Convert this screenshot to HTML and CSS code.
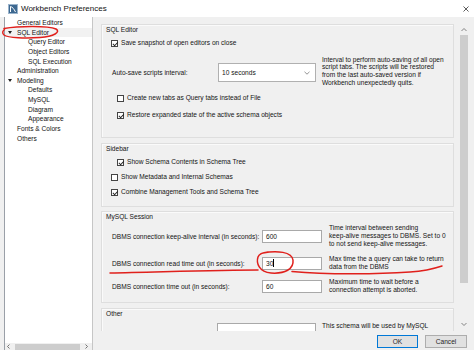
FILE: index.html
```html
<!DOCTYPE html>
<html lang="en">
<head>
  <meta charset="UTF-8">
  <title>Workbench Preferences</title>
  <link rel="stylesheet" href="styles.css">
</head>
<body>
  <div class="window">
    <!-- Barra de título -->
    <div class="titlebar">
      <svg class="app-icon" viewBox="0 0 10 10">
        <rect x="0.5" y="0.5" width="9" height="9" fill="#3d6890" stroke="#9bb4cc"/>
        <path d="M2.5 8 V2.5 C4.5 3 6 5 7.5 8" stroke="#fff" stroke-width="1" fill="none"/>
      </svg>
      <span class="title">Workbench Preferences</span>
      <svg class="close" viewBox="0 0 6 6">
        <path d="M0.5 0.5 L5.5 5.5 M5.5 0.5 L0.5 5.5" stroke="#333" stroke-width="0.8"/>
      </svg>
    </div>

    <div class="frame">
      <!-- Árvore -->
      <div class="tree">
        <div class="tree-list">
          <div class="node">General Editors</div>
          <div class="node open sel">SQL Editor</div>
          <div class="node child">Query Editor</div>
          <div class="node child">Object Editors</div>
          <div class="node child">SQL Execution</div>
          <div class="node">Administration</div>
          <div class="node open">Modeling</div>
          <div class="node child">Defaults</div>
          <div class="node child">MySQL</div>
          <div class="node child">Diagram</div>
          <div class="node child">Appearance</div>
          <div class="node">Fonts &amp; Colors</div>
          <div class="node">Others</div>
        </div>
        <div class="hscroll">
          <svg class="hs-arrow" viewBox="0 0 8 7"><path d="M4.5 1.5 L2.5 3.5 L4.5 5.5" stroke="#555" stroke-width="0.8" fill="none"/></svg>
          <div class="hs-thumb"></div>
          <svg class="hs-arrow" viewBox="0 0 8 7"><path d="M3.5 1.5 L5.5 3.5 L3.5 5.5" stroke="#555" stroke-width="0.8" fill="none"/></svg>
        </div>
      </div>

      <!-- Painel -->
      <div class="main">
        <div class="scroller">
          <div class="content">

            <div class="group g-sql">
              <div class="group-title">SQL Editor</div>
              <div class="row cb-row first"><span class="cb on"></span>Save snapshot of open editors on close</div>
              <div class="field-row autosave">
                <span class="label w-auto">Auto-save scripts interval:</span>
                <div class="select">10 seconds
                  <svg class="chev" viewBox="0 0 6 4"><path d="M0.5 0.8 L3 3.2 L5.5 0.8" stroke="#666" stroke-width="0.7" fill="none"/></svg>
                </div>
                <div class="desc tall">Interval to perform auto-saving of all open<br>script tabs. The scripts will be restored<br>from the last auto-saved version if<br>Workbench unexpectedly quits.</div>
              </div>
              <div class="row cb-row indent"><span class="cb"></span>Create new tabs as Query tabs instead of File</div>
              <div class="row cb-row indent"><span class="cb on"></span>Restore expanded state of the active schema objects</div>
            </div>

            <div class="group g-side">
              <div class="group-title">Sidebar</div>
              <div class="row cb-row indent"><span class="cb on"></span>Show Schema Contents in Schema Tree</div>
              <div class="row cb-row"><span class="cb"></span>Show Metadata and Internal Schemas</div>
              <div class="row cb-row"><span class="cb on"></span>Combine Management Tools and Schema Tree</div>
            </div>

            <div class="group g-session">
              <div class="group-title">MySQL Session</div>
              <div class="field-row first">
                <span class="label w-dbms">DBMS connection keep-alive interval (in seconds):</span>
                <div class="field">600</div>
                <div class="desc">Time interval between sending<br>keep-alive messages to DBMS. Set to 0<br>to not send keep-alive messages.</div>
              </div>
              <div class="field-row">
                <span class="label w-dbms">DBMS connection read time out (in seconds):</span>
                <div class="field">30<span class="caret"></span></div>
                <div class="desc">Max time the a query can take to return<br>data from the DBMS</div>
              </div>
              <div class="field-row">
                <span class="label w-dbms">DBMS connection time out (in seconds):</span>
                <div class="field">60</div>
                <div class="desc">Maximum time to wait before a<br>connection attempt is aborted.</div>
              </div>
            </div>

            <div class="group g-other">
              <div class="group-title">Other</div>
              <div class="field-row top first">
                <span class="label w-other"></span>
                <div class="field wide"></div>
                <div class="desc">This schema will be used by MySQL</div>
              </div>
            </div>

          </div>
          <div class="vscroll">
            <svg class="vs-arrow" viewBox="0 0 10 10"><path d="M2.5 6 L5 3.5 L7.5 6" stroke="#666" stroke-width="0.8" fill="none"/></svg>
            <div class="vs-thumb"></div>
            <div class="vs-fill"></div>
            <svg class="vs-arrow" viewBox="0 0 10 10"><path d="M2.5 4 L5 6.5 L7.5 4" stroke="#666" stroke-width="0.8" fill="none"/></svg>
          </div>
        </div>

        <div class="footer">
          <button class="btn default">OK</button>
          <button class="btn">Cancel</button>
        </div>
      </div>
    </div>

    <!-- Marcas vermelhas feitas à mão -->
    <svg class="marks" viewBox="0 0 474 350">
      <path d="M4 28.5 C18 26 48 25.5 56 29 C61 32 54 36.5 40 37.5 C26 38.5 8 38 4 35 C2 33 2.5 31 4.5 29.5"/>
      <path d="M263 253 C277 250 292 252 293 260 C294 269 285 274 271 273 C259 272 256 263 258 257 C259 254 262 252.5 268 252"/>
      <path d="M110 273 C160 272 220 270 258 270 M292 271.5 C330 275 380 274 410 272 C425 271 436 268 442 266"/>
    </svg>
  </div>
</body>
</html>
```

FILE: styles.css
```css
* { margin:0; padding:0; box-sizing:border-box; }
body { background:#fff; }
.window {
  position:relative;
  width:474px; height:350px;
  overflow:hidden;
  background:#f0f0f0;
  font-family:"Liberation Sans", Arial, sans-serif;
  font-size:6.6px; color:#141414;
}
/* Barra de título */
.titlebar {
  height:17px; background:#fff;
  display:flex; align-items:center;
}
.app-icon { width:10px; height:10px; margin-left:8px; }
.title { margin-left:3px; font-size:8px; color:#111; }
.close { width:6px; height:6px; margin-left:auto; margin-right:5px; }
.frame { display:flex; height:333px; }
/* Árvore */
.tree {
  width:89px; margin-left:4px;
  background:#fff;
  border-left:1px solid #9aa0a8; border-right:1px solid #c6c6c6;
  display:flex; flex-direction:column;
}
.tree-list { flex:1; padding-top:1px; }
.node {
  position:relative;
  height:9.65px; line-height:9.65px;
  padding-left:12px;
  white-space:nowrap;
}
.node.child { padding-left:23px; }
.node.sel { background:#f2f2f2; }
.node.open::before {
  content:""; position:absolute; left:3px; top:3.5px;
  border-left:2.5px solid transparent; border-right:2.5px solid transparent;
  border-top:3px solid #222;
}
.hscroll {
  height:7px; background:#f0f0f0;
  display:flex; padding:0 2px 0 0;
}
.hs-arrow { width:8px; height:7px; flex:none; }
.hs-thumb { flex:1; margin:1px 2px 0; background:#cdcdcd; }
/* Painel direito */
.main { flex:1; display:flex; flex-direction:column; }
.scroller { height:314px; display:flex; overflow:hidden; }
.content { width:353px; margin-left:8px; padding-top:7px; flex:none; }
.vscroll {
  width:11px; height:304px;
  margin-left:4px; margin-top:8px;
  display:flex; flex-direction:column; align-items:center;
}
.vs-arrow { width:10px; height:10px; flex:none; }
.vs-thumb { width:8px; height:248px; background:#cdcdcd; flex:none; }
.vs-fill { flex:1; }
/* Grupos */
.group {
  border:1px solid #dedede;
  box-shadow:inset 1px 1px 0 #fafafa;
  margin-bottom:5px;
}
.g-sql { padding-bottom:17px; }
.g-side { padding-bottom:9px; margin-bottom:4px; }
.g-session { padding-bottom:8px; }
.g-other { height:60px; }
.group-title { height:9px; line-height:9px; padding-left:4px; white-space:nowrap; }
.row {
  height:10px; line-height:10px;
  display:flex; align-items:center;
  white-space:nowrap;
}
.cb-row { margin-top:5px; padding-left:9px; }
.cb-row.indent { padding-left:15px; }
.g-sql .cb-row { margin-top:7px; }
.g-sql .cb-row.first { margin-top:4px; }
.g-side .cb-row:nth-child(2) { margin-top:4px; }
.cb {
  position:relative;
  width:7px; height:7px; flex:none;
  margin-right:3px;
  border:1px solid #444; background:#fff;
}
.cb.on::after {
  content:""; position:absolute; left:1.6px; top:0;
  width:1.8px; height:3.6px;
  border-right:1px solid #222; border-bottom:1px solid #222;
  transform:rotate(45deg);
}
/* Linhas com campos */
.field-row {
  display:flex; align-items:center;
  padding-left:10px; margin-top:7px;
  white-space:nowrap;
}
.field-row.first { margin-top:3px; }
.field-row.top { align-items:flex-start; margin-top:4px; }
.autosave { margin-top:7.5px; }
.label { flex:none; }
.w-auto { width:106px; margin-top:3px; }
.w-dbms { width:150px; }
.w-other { width:105px; }
.select {
  position:relative;
  width:98px; height:19px; margin-top:3px;
  background:#fff; border:1px solid #b0b0b0;
  line-height:17px; padding-left:3px;
}
.chev { position:absolute; right:5px; top:7px; width:6px; height:4px; }
.field {
  width:60px; height:13px; flex:none;
  background:#fff; border:1px solid #a9a9a9;
  line-height:11px; padding-left:3px;
}
.field.wide { width:99px; margin-top:1px; }
.caret { display:inline-block; width:1px; height:8px; background:#000; vertical-align:-1.5px; }
.desc { margin-left:7px; line-height:8px; }
.desc.tall { margin-left:6px; line-height:7.7px; }
.g-other .desc { margin-left:6px; }
/* Botões */
.footer {
  flex:1;
  display:flex; justify-content:flex-end; gap:7px;
  padding:4px 7px 0 0;
}
.btn {
  width:42px; height:13px;
  font:inherit; color:#1e1e1e;
  background:#e1e1e1; border:1px solid #adadad;
}
.btn.default { width:41px; border-color:#0078d7; }
/* Marcas */
.marks {
  position:absolute; top:0; left:0;
  width:474px; height:350px; pointer-events:none;
  fill:none; stroke:#e0201c; stroke-width:1.5; stroke-linecap:round;
}
```
